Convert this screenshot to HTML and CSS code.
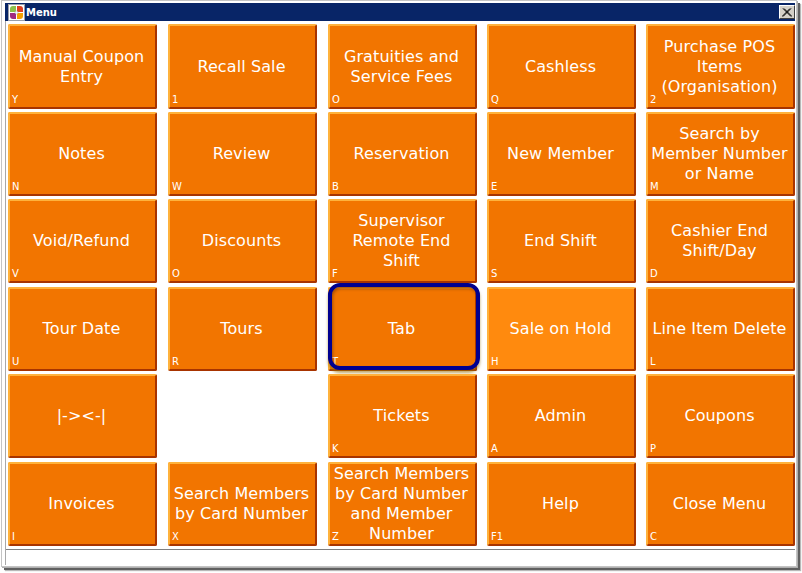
FILE: index.html
```html
<!DOCTYPE html>
<html lang="en">
<head>
    <meta charset="UTF-8">
    <title>Menu</title>
    <link rel="stylesheet" href="styles.css">
</head>
<body>
    <div class="window">
        <div class="titlebar">
            <svg class="app-icon" width="17" height="17" viewBox="0 0 17 17">
                <rect x="0.5" y="0.5" width="16" height="16" fill="#fff" stroke="#9a9fa8"/>
                <path d="M2 8V5Q2 2 5 2H8V8Z" fill="#8cc04a"/>
                <path d="M9 2H12Q15 2 15 5V8H9Z" fill="#e0401e"/>
                <path d="M2 9H8V15H5Q2 15 2 12Z" fill="#a02a80"/>
                <path d="M9 9H15V12Q15 15 12 15H9Z" fill="#f5a000"/>
                <circle cx="8.5" cy="8.5" r="1.5" fill="#fff" stroke="#9a9fa8" stroke-width="0.6"/>
            </svg>
            <span class="title">Menu</span>
            <button class="close-btn">
                <svg width="10" height="9" viewBox="0 0 10 9"><path d="M1 0.5L9 8.5M9 0.5L1 8.5M2 0.5L10 8.5M8 0.5L0 8.5" stroke="#000" fill="none"/></svg>
            </button>
        </div>

        <div class="client">
            <div class="menu-grid">
                <button class="menu-btn">Manual Coupon Entry<span class="key">Y</span></button>
                <button class="menu-btn">Recall Sale<span class="key">1</span></button>
                <button class="menu-btn">Gratuities and Service Fees<span class="key">O</span></button>
                <button class="menu-btn">Cashless<span class="key">Q</span></button>
                <button class="menu-btn">Purchase POS Items (Organisation)<span class="key">2</span></button>

                <button class="menu-btn">Notes<span class="key">N</span></button>
                <button class="menu-btn">Review<span class="key">W</span></button>
                <button class="menu-btn">Reservation<span class="key">B</span></button>
                <button class="menu-btn">New Member<span class="key">E</span></button>
                <button class="menu-btn">Search by Member Number or Name<span class="key">M</span></button>

                <button class="menu-btn">Void/Refund<span class="key">V</span></button>
                <button class="menu-btn">Discounts<span class="key">O</span></button>
                <button class="menu-btn">Supervisor<br>Remote End<br>Shift<span class="key">F</span></button>
                <button class="menu-btn">End Shift<span class="key">S</span></button>
                <button class="menu-btn">Cashier End Shift/Day<span class="key">D</span></button>

                <button class="menu-btn">Tour Date<span class="key">U</span></button>
                <button class="menu-btn">Tours<span class="key">R</span></button>
                <button class="menu-btn focused">Tab<span class="key">T</span></button>
                <button class="menu-btn light">Sale on Hold<span class="key">H</span></button>
                <button class="menu-btn">Line Item Delete<span class="key">L</span></button>

                <button class="menu-btn">|-&gt;&lt;-|</button>
                <div class="empty"></div>
                <button class="menu-btn">Tickets<span class="key">K</span></button>
                <button class="menu-btn">Admin<span class="key">A</span></button>
                <button class="menu-btn">Coupons<span class="key">P</span></button>

                <button class="menu-btn">Invoices<span class="key">I</span></button>
                <button class="menu-btn">Search Members by Card Number<span class="key">X</span></button>
                <button class="menu-btn">Search Members by Card Number and Member Number<span class="key">Z</span></button>
                <button class="menu-btn">Help<span class="key">F1</span></button>
                <button class="menu-btn">Close Menu<span class="key">C</span></button>
            </div>

            <div class="statusbar"></div>
        </div>
    </div>
</body>
</html>
```

FILE: styles.css
```css
/* General Styles */
html, body {
    margin: 0;
    padding: 0;
    background: #fff;
}

body {
    width: 802px;
    height: 573px;
    overflow: hidden;
    font-family: "DejaVu Sans", Verdana, sans-serif;
}

/* Window frame */
.window {
    box-sizing: border-box;
    width: 796px;
    height: 567px;
    margin-left: 1px;
    background: #fff;
    border: 1px solid #c4c4c4;
    padding: 2px 1px 1px 3px;
    box-shadow: 1px 1px 0 #b0b0b0, 3px 3px 0 #606060, 4px 4px 1px #b8b8b8;
    display: flex;
    flex-direction: column;
}

/* Title bar */
.titlebar {
    height: 18px;
    flex-shrink: 0;
    background: #082567;
    display: flex;
    align-items: center;
    padding: 0 0 0 3px;
    color: #fff;
}

.app-icon {
    flex-shrink: 0;
    margin-top: 1px;
}

.title {
    margin-left: 1px;
    font-size: 10px;
    font-weight: bold;
    flex-grow: 1;
}

.close-btn {
    width: 16px;
    height: 14px;
    padding: 0;
    background: #d4d0c8;
    border: 1px solid;
    border-color: #fff #404040 #404040 #fff;
    display: flex;
    align-items: center;
    justify-content: center;
}

/* Client area */
.client {
    flex-grow: 1;
    display: flex;
    flex-direction: column;
    border-left: 1px solid #a8a8a8;
}

/* Button grid */
.menu-grid {
    display: grid;
    grid-template-columns: 160px 160px 159px 159px 149px;
    grid-template-rows: repeat(6, 84px);
    row-gap: 3.5px;
    padding: 3px 0 0 2px;
}

.menu-btn {
    position: relative;
    box-sizing: border-box;
    width: 149px;
    padding: 0 2px 0 0;
    font-family: inherit;
    font-size: 16px;
    line-height: 20px;
    letter-spacing: 0.1px;
    color: #fff;
    background: #f27500;
    border: 2px solid;
    border-color: #ffb23c #a83400 #a83400 #ffb23c;
    border-radius: 2px;
}

/* Top row runs a pixel taller */
.menu-btn:nth-child(-n+5) {
    height: 85px;
    padding-top: 1px;
}

.menu-btn.light {
    background: #ff8a0e;
}

/* Focus ring sits up and to the right of the button */
.menu-btn.focused::after {
    content: "";
    position: absolute;
    left: -2px;
    top: -6px;
    box-sizing: border-box;
    width: 152px;
    height: 87px;
    border: 4px solid #00008f;
    border-radius: 12px;
    box-shadow: inset 1px 2px 3px #a85000, 0 3px 3px rgba(150, 110, 0, 0.6);
}

.key {
    position: absolute;
    left: 2px;
    bottom: 1px;
    font-size: 10px;
    line-height: 12px;
    letter-spacing: 0;
}

/* Status bar */
.statusbar {
    flex-grow: 1;
    margin-top: 3px;
    border-top: 1px solid #808080;
    background: #fff;
}
```
